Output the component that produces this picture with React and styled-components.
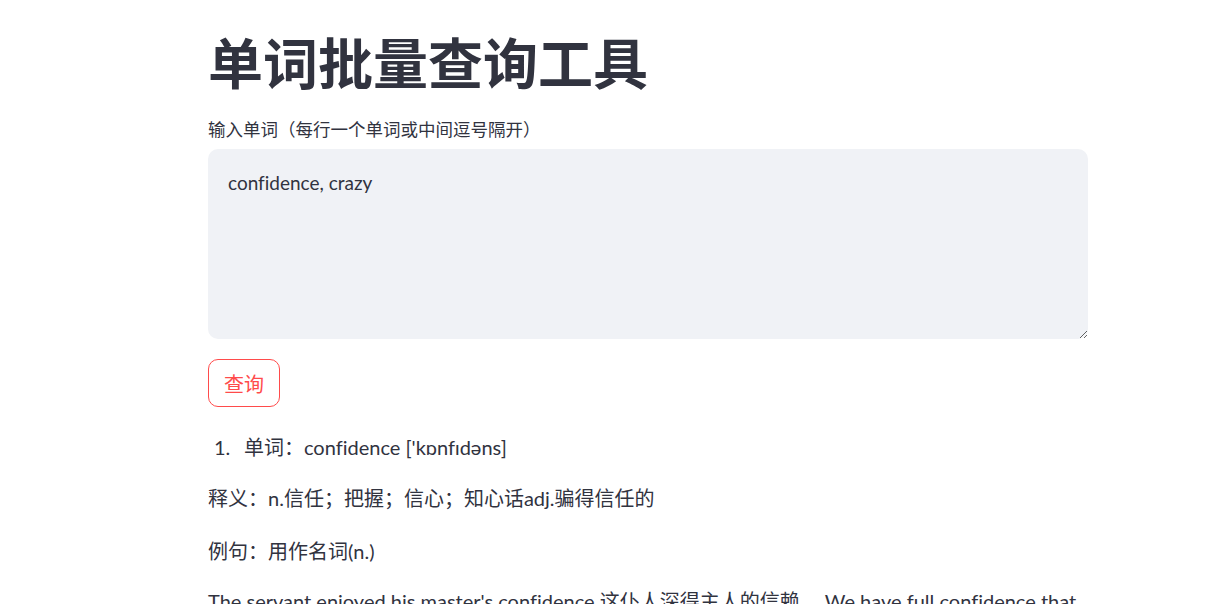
import React from 'react';
import styled, { createGlobalStyle } from 'styled-components';

const GlobalStyle = createGlobalStyle`
  html, body {
    margin: 0;
    padding: 0;
    background: #ffffff;
    overflow: hidden;
  }
  body {
    font-family: Lato, 'Noto Sans CJK SC', sans-serif;
    font-variant-ligatures: none;
    color: #31333f;
  }
`;

const Page = styled.div`
  display: flex;
  flex-direction: column;
  width: 880px;
  padding: 27px 0 0 208px;
`;

const Title = styled.h1`
  margin: 0;
  font-family: 'Noto Sans CJK SC', sans-serif;
  font-size: 55px;
  line-height: 66px;
  font-weight: 700;
  color: #31333f;
`;

const Label = styled.label`
  margin-top: 22px;
  font-family: 'Noto Sans CJK SC', sans-serif;
  font-size: 17.5px;
  line-height: 28px;
`;

const TextArea = styled.textarea`
  margin-top: 6px;
  box-sizing: border-box;
  width: 100%;
  height: 190px;
  padding: 20px 20px;
  border: none;
  outline: none;
  border-radius: 10px;
  background: #f0f2f6;
  color: #31333f;
  font-family: inherit;
  font-variant-ligatures: none;
  font-size: 19px;
  line-height: 28px;
  resize: vertical;
`;

const Button = styled.button`
  align-self: flex-start;
  margin-top: 20px;
  height: 48px;
  padding: 0 15px;
  border: 1px solid #ff4b4b;
  border-radius: 10px;
  background: #ffffff;
  color: #ff4b4b;
  font-family: 'Noto Sans CJK SC', sans-serif;
  font-size: 20px;
`;

const Result = styled.div`
  margin-top: 24px;
  font-size: 20px;
  line-height: 32px;
`;

const List = styled.ol`
  margin: 0 0 ${p => p.$gap}px;
  padding: 0;
  list-style: none;
`;

const Item = styled.li`
  display: flex;
`;

const Marker = styled.span`
  width: 36px;
  padding-left: 6px;
  box-sizing: border-box;
`;

const Para = styled.p`
  margin: 0 0 ${p => p.$gap}px;
`;

export default function App() {
  return (
    <>
      <GlobalStyle />
      <Page>
        <Title>单词批量查询工具</Title>
        <Label>输入单词（每行一个单词或中间逗号隔开）</Label>
        <TextArea defaultValue="confidence, crazy" />
        <Button>查询</Button>
        <Result>
          <List $gap={19}>
            <Item>
              <Marker>1.</Marker>
              <span>单词：confidence ['kɒnfɪdəns]</span>
            </Item>
          </List>
          <Para $gap={21}>释义：n.信任；把握；信心；知心话adj.骗得信任的</Para>
          <Para $gap={18}>例句：用作名词(n.)</Para>
          <Para $gap={20}>
            The servant enjoyed his master's confidence 这仆人深得主人的信赖。 We have full confidence that we will win the game. 我们完全有信心赢得这场比赛。
          </Para>
        </Result>
      </Page>
    </>
  );
}
